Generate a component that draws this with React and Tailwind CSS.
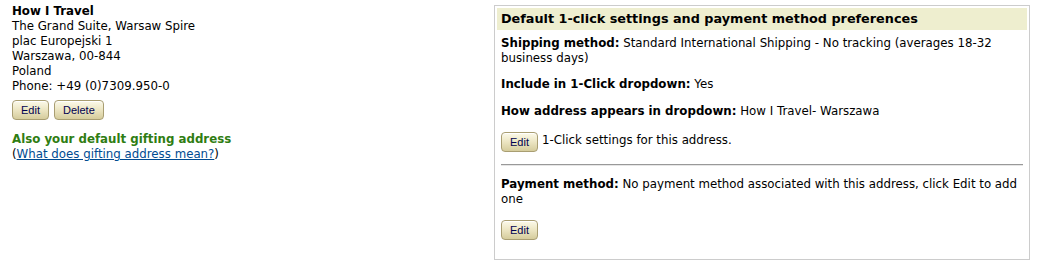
export default function App() {
  const btn =
    "h-[20px] rounded-[4px] border border-[#a99e72] bg-gradient-to-b from-[#fcfaea] via-[#ece5c2] to-[#d5cc9c] px-[8px] font-['Liberation_Sans',Arial,sans-serif] text-[11px] leading-[18px] text-[#000050] shadow-[inset_0_1px_0_#fff]";

  return (
    <div className="flex min-h-[273px] bg-white pt-[4px] font-['DejaVu_Sans',Verdana,sans-serif] text-[11.8px] leading-[15px] text-black">
      {/* Address block */}
      <div className="w-[494px] shrink-0 pl-[12px]">
        <div className="font-bold">How I Travel</div>
        <div>The Grand Suite, Warsaw Spire</div>
        <div>plac Europejski 1</div>
        <div>Warszawa, 00-844</div>
        <div>Poland</div>
        <div>Phone: +49 (0)7309.950-0</div>
        <div className="mt-[6px] flex gap-[5px]">
          <button className={btn}>Edit</button>
          <button className={btn}>Delete</button>
        </div>
        <div className="mt-[12px] font-bold text-[#2f7d12]">Also your default gifting address</div>
        <div>
          (<a href="#" className="text-[#004b91] underline">What does gifting address mean?</a>)
        </div>
      </div>

      {/* 1-click settings box */}
      <div className="mt-[1px] h-[255px] w-[536px] shrink-0 border border-[#cccccc] p-[2px]">
        <div className="h-[22px] bg-[#eeeecf] pl-[4px] text-[12.8px] font-bold leading-[22px]">
          Default 1-click settings and payment method preferences
        </div>
        <div className="px-[4px] pt-[6px]">
          <p>
            <span className="font-bold">Shipping method:</span> Standard International Shipping - No
            tracking (averages 18-32 business days)
          </p>
          <p className="mt-[11px]">
            <span className="font-bold">Include in 1-Click dropdown:</span> Yes
          </p>
          <p className="mt-[12px]">
            <span className="font-bold">How address appears in dropdown:</span> How I Travel- Warszawa
          </p>
          <div className="mt-[13px] flex items-start gap-[4px]">
            <button className={btn}>Edit</button>
            <span className="pt-[1px]">1-Click settings for this address.</span>
          </div>
          <div className="mt-[12px] h-[2px] border-t border-b border-t-[#999999] border-b-[#e6e6e6]" />
          <p className="mt-[11px]">
            <span className="font-bold">Payment method:</span> No payment method associated with this
            address, click Edit to add one
          </p>
          <div className="mt-[13px]">
            <button className={btn}>Edit</button>
          </div>
        </div>
      </div>
    </div>
  );
}
